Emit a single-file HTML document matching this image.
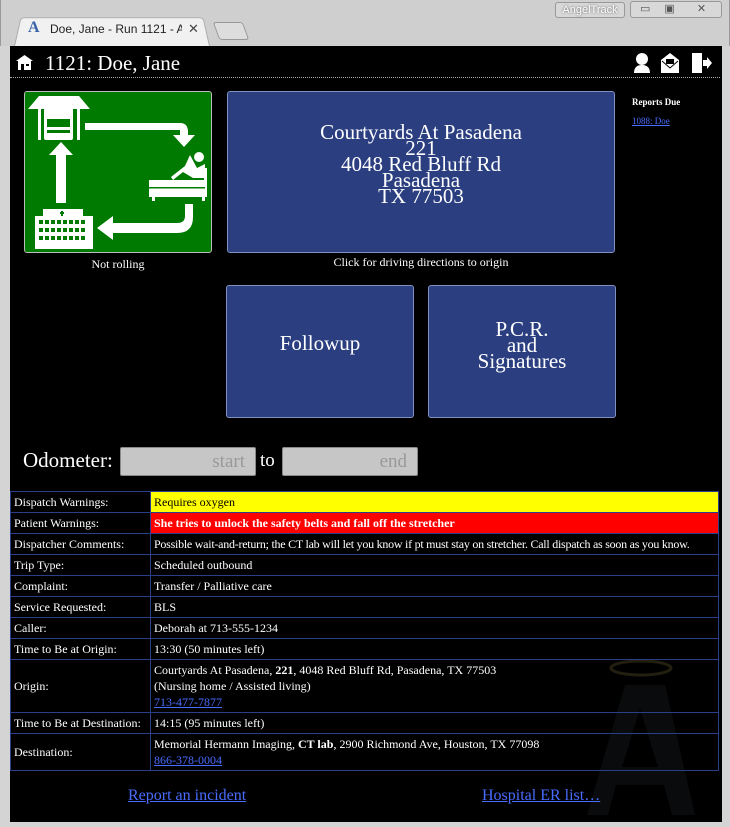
<!DOCTYPE html>
<html><head><style>
*{box-sizing:border-box}
body{margin:0;width:730px;height:827px;background:#d4d4d4;font-family:"Liberation Serif",serif;position:relative;overflow:hidden}
.abs{position:absolute}
.page{left:10px;top:46px;width:712px;height:776px;background:#000;color:#fff}
.btn{position:absolute;background:#2b3f80;border:1px solid #8090c0;border-radius:3px;color:#fff;text-align:center;display:flex;align-items:center;justify-content:center;line-height:17px}
table{position:absolute;left:0;top:445px;width:709px;border-collapse:collapse;font-size:12px;white-space:nowrap}
td{border:1px solid #2a3f8a;padding:2px 3px;height:21px;vertical-align:middle}
td.l{width:140px}
a{color:#4a6cff;text-decoration:underline}
.inp{position:absolute;top:401px;height:29px;background:#c6c6c6;border:1px solid #888;border-radius:2px;color:#999;font-size:19px;text-align:right;padding-right:10px;line-height:27px}
</style></head><body>
<div class="abs" style="left:0;top:0;width:730px;height:46px;background:#cfcfcf;border-left:1px solid #999;border-right:1px solid #999"></div>
<div class="abs" style="left:555px;top:2px;width:70px;height:16px;border:1px solid #999;border-radius:3px;font:11px 'Liberation Sans',sans-serif;color:#fff;text-shadow:0 0 2px #555;text-align:center;line-height:14px;background:#d8d8d8">AngelTrack</div>
<div class="abs" style="left:630px;top:1px;width:92px;height:17px;border:1px solid #999;border-radius:3px;background:#d8d8d8;font:11px 'Liberation Sans',sans-serif;color:#555;line-height:15px"><span style="margin-left:9px">▭</span><span style="margin-left:14px">▣</span><span style="margin-left:22px">✕</span></div>
<div class="abs" style="left:14px;top:15px;width:196px;height:31px;background:#f1f1f1;border:1px solid #aaa;border-bottom:none;border-radius:4px 4px 0 0;transform:perspective(60px) rotateX(8deg);transform-origin:bottom"></div>
<div class="abs" style="left:28px;top:19px;font:bold 16px 'Liberation Serif',serif;color:#3a63a8">A</div>
<div class="abs" style="left:50px;top:22px;font:12px 'Liberation Sans',sans-serif;color:#222;width:132px;white-space:nowrap;overflow:hidden">Doe, Jane - Run 1121 - Angel</div>
<div class="abs" style="left:188px;top:21px;font:13px 'Liberation Sans',sans-serif;color:#444">✕</div>
<div class="abs" style="left:216px;top:22px;width:30px;height:18px;border:1px solid #999;border-radius:3px;transform:skewX(20deg);background:#ddd"></div>

<div class="abs page">
 <div class="abs" style="left:6px;top:9px;width:17px;height:15px">
  <svg width="17" height="15"><path d="M0 6 L8.5 0 L17 6Z" fill="#fff"/><rect x="2" y="6" width="13" height="9" fill="#fff"/><rect x="5" y="9" width="3" height="6" fill="#000"/><rect x="10" y="9" width="3" height="2" fill="#000"/></svg>
 </div>
 <div class="abs" style="left:35px;top:5px;font-size:21px">1121: Doe, Jane</div>
 <svg class="abs" style="left:623px;top:6px" width="90" height="22">
  <circle cx="9" cy="7" r="6" fill="#fff"/><path d="M1 21 Q1 13 9 13 Q17 13 17 21Z" fill="#fff"/>
  <path d="M28 8 L37 1 L46 8 V21 H28Z" fill="#fff"/><path d="M29 9 L37 16 L45 9" stroke="#000" fill="none"/><rect x="33" y="7" width="8" height="5" fill="#000"/>
  <rect x="59" y="1" width="10" height="20" fill="#fff"/><path d="M70 8 h4 v-3 l5 6 l-5 6 v-3 h-4z" fill="#fff"/>
 </svg>
 <div class="abs" style="left:0;top:31px;width:710px;border-top:1px dotted #aaa"></div>

 <div class="abs" style="left:14px;top:45px;width:188px;height:162px;background:#007a00;border:1px solid #bbb;border-radius:3px">
  <svg width="188" height="162" fill="#fff">
   <path d="M3 17 L14 4 H54 L65 17Z"/><rect x="13" y="14" width="3" height="34"/><rect x="52" y="14" width="3" height="34"/>
   <rect x="19" y="16" width="29" height="32" rx="2"/><rect x="22" y="27" width="23" height="8" fill="#007a00"/><rect x="22" y="38" width="23" height="3" fill="#007a00"/>
   <rect x="60" y="31" width="95" height="7"/><path d="M155 31 Q163 31 163 40 V43 H170 L159 55 L148 43 H155 V40Z"/>
   <path d="M36 50 L48 63 H41 V111 H31 V63 H24Z"/>
   <circle cx="174" cy="65" r="5"/><path d="M165 63 L172 76 L180 72 L180 86 L168 86 L158 80 L148 88 L146 85 L160 74 Z"/>
   <rect x="124" y="88" width="56" height="17"/><rect x="179" y="76" width="3" height="29"/><rect x="127" y="105" width="3" height="4"/><rect x="177" y="105" width="3" height="4"/><rect x="124" y="95" width="56" height="1.5" fill="#007a00"/>
   <path d="M160 112 H168 V125 Q168 141 152 141 H88 V148 L72 136 L88 124 V131 H152 Q160 131 160 124Z"/>
   <rect x="18" y="117" width="40" height="7"/><rect x="10" y="124" width="58" height="33"/>
   <g fill="#007a00"><rect x="14" y="128" width="4" height="4"/><rect x="20" y="128" width="4" height="4"/><rect x="26" y="128" width="4" height="4"/><rect x="32" y="128" width="4" height="4"/><rect x="38" y="128" width="4" height="4"/><rect x="44" y="128" width="4" height="4"/><rect x="50" y="128" width="4" height="4"/><rect x="56" y="128" width="4" height="4"/>
   <rect x="14" y="136" width="4" height="4"/><rect x="20" y="136" width="4" height="4"/><rect x="26" y="136" width="4" height="4"/><rect x="32" y="136" width="4" height="4"/><rect x="38" y="136" width="4" height="4"/><rect x="44" y="136" width="4" height="4"/><rect x="50" y="136" width="4" height="4"/><rect x="56" y="136" width="4" height="4"/>
   <rect x="14" y="144" width="4" height="4"/><rect x="20" y="144" width="4" height="4"/><rect x="26" y="144" width="4" height="4"/><rect x="32" y="144" width="4" height="4"/><rect x="38" y="144" width="4" height="4"/><rect x="44" y="144" width="4" height="4"/><rect x="50" y="144" width="4" height="4"/><rect x="56" y="144" width="4" height="4"/>
   <rect x="36" y="119" width="2" height="5"/><rect x="35" y="120" width="4" height="2"/></g>
  </svg>
 </div>
 <div class="abs" style="left:14px;top:211px;width:188px;text-align:center;font-size:12px">Not rolling</div>

 <div class="btn" style="left:217px;top:45px;width:388px;height:162px;font-size:21px;line-height:16px;padding-bottom:16px">Courtyards At Pasadena<br>221<br>4048 Red Bluff Rd<br>Pasadena<br>TX 77503</div>
 <div class="abs" style="left:217px;top:209px;width:388px;text-align:center;font-size:12px">Click for driving directions to origin</div>
 <div class="abs" style="left:622px;top:51px;font-size:9px;font-weight:bold">Reports Due</div>
 <div class="abs" style="left:622px;top:70px;font-size:9px"><a>1088: Doe</a></div>

 <div class="btn" style="left:216px;top:239px;width:188px;height:133px;font-size:21px;padding-bottom:17px">Followup</div>
 <div class="btn" style="left:418px;top:239px;width:188px;height:133px;font-size:21px;line-height:16px;padding-bottom:14px">P.C.R.<br>and<br>Signatures</div>

 <div class="abs" style="left:13px;top:402px;font-size:21px">Odometer:</div>
 <div class="inp" style="left:110px;width:136px">start</div>
 <div class="abs" style="left:250px;top:404px;font-size:19px">to</div>
 <div class="inp" style="left:272px;width:136px">end</div>

 <svg class="abs" style="left:570px;top:613px" width="130" height="160"><ellipse cx="61" cy="9" rx="30" ry="7" stroke="#221f10" stroke-width="3" fill="none"/><path d="M45 26 H85 L115 156 H92 L84 126 H36 L28 156 H7Z M42 108 H78 L60 50Z" fill="#0a0b0d" fill-rule="evenodd"/></svg>

 <table>
 <tr><td class="l">Dispatch Warnings:</td><td style="background:#ff0;color:#000">Requires oxygen</td></tr>
 <tr><td class="l">Patient Warnings:</td><td style="background:#f00;font-weight:bold">She tries to unlock the safety belts and fall off the stretcher</td></tr>
 <tr><td class="l">Dispatcher Comments:</td><td style="letter-spacing:-0.25px">Possible wait-and-return; the CT lab will let you know if pt must stay on stretcher. Call dispatch as soon as you know.</td></tr>
 <tr><td class="l">Trip Type:</td><td>Scheduled outbound</td></tr>
 <tr><td class="l">Complaint:</td><td>Transfer / Palliative care</td></tr>
 <tr><td class="l">Service Requested:</td><td>BLS</td></tr>
 <tr><td class="l">Caller:</td><td>Deborah at 713-555-1234</td></tr>
 <tr><td class="l">Time to Be at Origin:</td><td>13:30 (50 minutes left)</td></tr>
 <tr><td class="l">Origin:</td><td style="line-height:16px">Courtyards At Pasadena, <b>221</b>, 4048 Red Bluff Rd, Pasadena, TX 77503<br>(Nursing home / Assisted living)<br><a>713-477-7877</a></td></tr>
 <tr><td class="l">Time to Be at Destination:</td><td>14:15 (95 minutes left)</td></tr>
 <tr><td class="l">Destination:</td><td style="line-height:16px">Memorial Hermann Imaging, <b>CT lab</b>, 2900 Richmond Ave, Houston, TX 77098<br><a>866-378-0004</a></td></tr>
 </table>
 <div class="abs" style="left:118px;top:741px;font-size:16px"><a>Report an incident</a></div>
 <div class="abs" style="left:472px;top:741px;font-size:16px"><a>Hospital ER list…</a></div>
</div>
</body></html>
